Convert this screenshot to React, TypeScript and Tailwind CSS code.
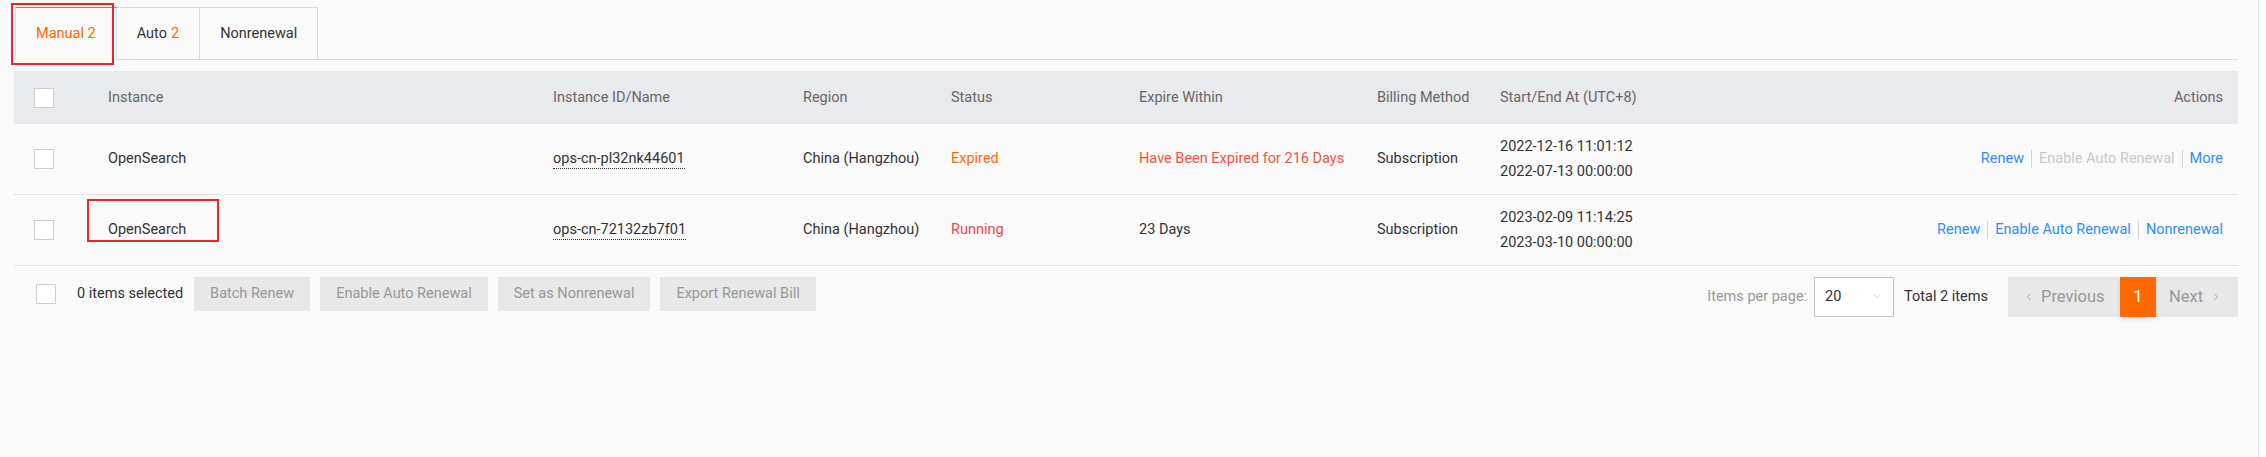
import * as React from 'react';
import { ChevronDown, ChevronLeft, ChevronRight } from 'lucide-react';

const COLS = 'grid grid-cols-[94px_445px_250px_148px_188px_238px_123px_1fr]';

interface Row {
  id: string;
  status: string;
  statusClass: string;
  expire: string;
  expireClass: string;
  start: string;
  end: string;
  highlight?: boolean;
  actions: { label: string; disabled?: boolean }[];
}

const rows: Row[] = [
  {
    id: 'ops-cn-pl32nk44601',
    status: 'Expired',
    statusClass: 'text-[#ff6a00]',
    expire: 'Have Been Expired for 216 Days',
    expireClass: 'text-[#f4533d]',
    start: '2022-12-16 11:01:12',
    end: '2022-07-13 00:00:00',
    actions: [{ label: 'Renew' }, { label: 'Enable Auto Renewal', disabled: true }, { label: 'More' }],
  },
  {
    id: 'ops-cn-72132zb7f01',
    status: 'Running',
    statusClass: 'text-[#f2474f]',
    expire: '23 Days',
    expireClass: 'text-[#333]',
    start: '2023-02-09 11:14:25',
    end: '2023-03-10 00:00:00',
    highlight: true,
    actions: [{ label: 'Renew' }, { label: 'Enable Auto Renewal' }, { label: 'Nonrenewal' }],
  },
];

function Checkbox() {
  return <span className="block w-[20px] h-[20px] border border-[#cfcfcf] bg-white" />;
}

function Tabs() {
  return (
    <div className="relative flex h-[60px] pt-[7px] border-b border-[#dcdcdc]">
      <div className="-mb-px flex items-center px-[20px] border border-[#dcdcdc] border-t-[#ff6a00] border-b-[#fafafa] bg-[#fafafa] text-[#ff6a00]">
        Manual 2
      </div>
      <div className="-mb-px flex items-center px-[20px] border border-l-0 border-[#dcdcdc] bg-[#fafafa] text-[#333]">
        Auto<span className="ml-[4px] text-[#ff6a00]">2</span>
      </div>
      <div className="-mb-px flex items-center px-[20px] border border-l-0 border-[#dcdcdc] bg-[#fafafa] text-[#333]">
        Nonrenewal
      </div>
      {/* annotation box */}
      <div className="absolute left-[-4px] top-[3px] w-[103px] h-[62px] border-2 border-[#e8262b]" />
    </div>
  );
}

function Actions({ actions }: { actions: Row['actions'] }) {
  return (
    <div className="flex items-center justify-end pr-[15px]">
      {actions.map((a, i) => (
        <React.Fragment key={a.label}>
          {i > 0 && <span className="mx-[7px] w-px h-[18px] bg-[#d4d4d4]" />}
          <span className={a.disabled ? 'text-[#cacaca]' : 'text-[#2f8ef4]'}>{a.label}</span>
        </React.Fragment>
      ))}
    </div>
  );
}

function Table() {
  return (
    <div className="mt-[11px]">
      <div className={`${COLS} h-[53px] items-center bg-[#e9eaee] text-[#666]`}>
        <div className="pl-[20px]">
          <Checkbox />
        </div>
        <div>Instance</div>
        <div>Instance ID/Name</div>
        <div>Region</div>
        <div>Status</div>
        <div>Expire Within</div>
        <div className="whitespace-nowrap">Billing Method</div>
        <div className="flex justify-between pr-[15px]">
          <span>Start/End At (UTC+8)</span>
          <span>Actions</span>
        </div>
      </div>
      {rows.map((r) => (
        <div key={r.id} className={`${COLS} h-[71px] items-center border-b border-[#e3e3e3] text-[#333]`}>
          <div className="pl-[20px]">
            <Checkbox />
          </div>
          <div className="relative">
            OpenSearch
            {r.highlight && (
              <div className="absolute left-[-21px] top-[-20px] w-[132px] h-[43px] border-2 border-[#e8262b]" />
            )}
          </div>
          <div>
            <span className="border-b border-dotted border-[#333] pb-[1px]">{r.id}</span>
          </div>
          <div>China (Hangzhou)</div>
          <div className={r.statusClass}>{r.status}</div>
          <div className={`whitespace-nowrap ${r.expireClass}`}>{r.expire}</div>
          <div>Subscription</div>
          <div className="flex items-center justify-between">
            <div className="leading-[25px]">
              <div>{r.start}</div>
              <div>{r.end}</div>
            </div>
            <Actions actions={r.actions} />
          </div>
        </div>
      ))}
    </div>
  );
}

function Footer() {
  const buttons = ['Batch Renew', 'Enable Auto Renewal', 'Set as Nonrenewal', 'Export Renewal Bill'];
  return (
    <div className="mt-[11px] flex items-start justify-between">
      <div className="flex items-center h-[34px]">
        <div className="ml-[22px]">
          <Checkbox />
        </div>
        <span className="ml-[21px] text-[#333]">0 items selected</span>
        <div className="ml-[11px] flex gap-[10px]">
          {buttons.map((b) => (
            <span key={b} className="h-[34px] flex items-center px-[16px] bg-[#e8e8e8] text-[#999]">
              {b}
            </span>
          ))}
        </div>
      </div>
      <div className="flex items-center h-[40px]">
        <span className="text-[#999]">Items per page:</span>
        <div className="ml-[7px] w-[80px] h-[40px] border border-[#c4c6cf] bg-white flex items-start justify-between pl-[10px] pr-[10px] pt-[8px]">
          <span className="text-[#333]">20</span>
          <ChevronDown className="mt-[4px] w-[12px] h-[12px] text-[#c8c8c8]" strokeWidth={1.5} />
        </div>
        <span className="ml-[10px] text-[#333]">Total 2 items</span>
        <div className="ml-[20px] flex h-[40px] text-[16.5px] bg-[#e8e8e8]">
          <span className="w-[112px] flex items-center pl-[15px] gap-[6px] text-[#999]">
            <ChevronLeft className="w-[12px] h-[12px]" strokeWidth={1.5} />
            Previous
          </span>
          <span className="w-[36px] flex items-center justify-center bg-[#ff6a00] text-white shadow-[0_2px_4px_rgba(0,0,0,0.12)]">
            1
          </span>
          <span className="w-[82px] flex items-center pl-[13px] gap-[7px] text-[#999]">
            Next
            <ChevronRight className="w-[12px] h-[12px]" strokeWidth={1.5} />
          </span>
        </div>
      </div>
    </div>
  );
}

export default function App() {
  return (
    <div className="flex h-[457px] w-full text-[14.5px] font-['Roboto',sans-serif]">
      <div className="flex-1 bg-[#fafafa] pl-[14px] pr-[20px]">
        <div className="pl-[1px]">
          <Tabs />
        </div>
        <Table />
        <Footer />
      </div>
      <div className="w-[8px] bg-white border-l border-[#e4e4e4]" />
    </div>
  );
}
